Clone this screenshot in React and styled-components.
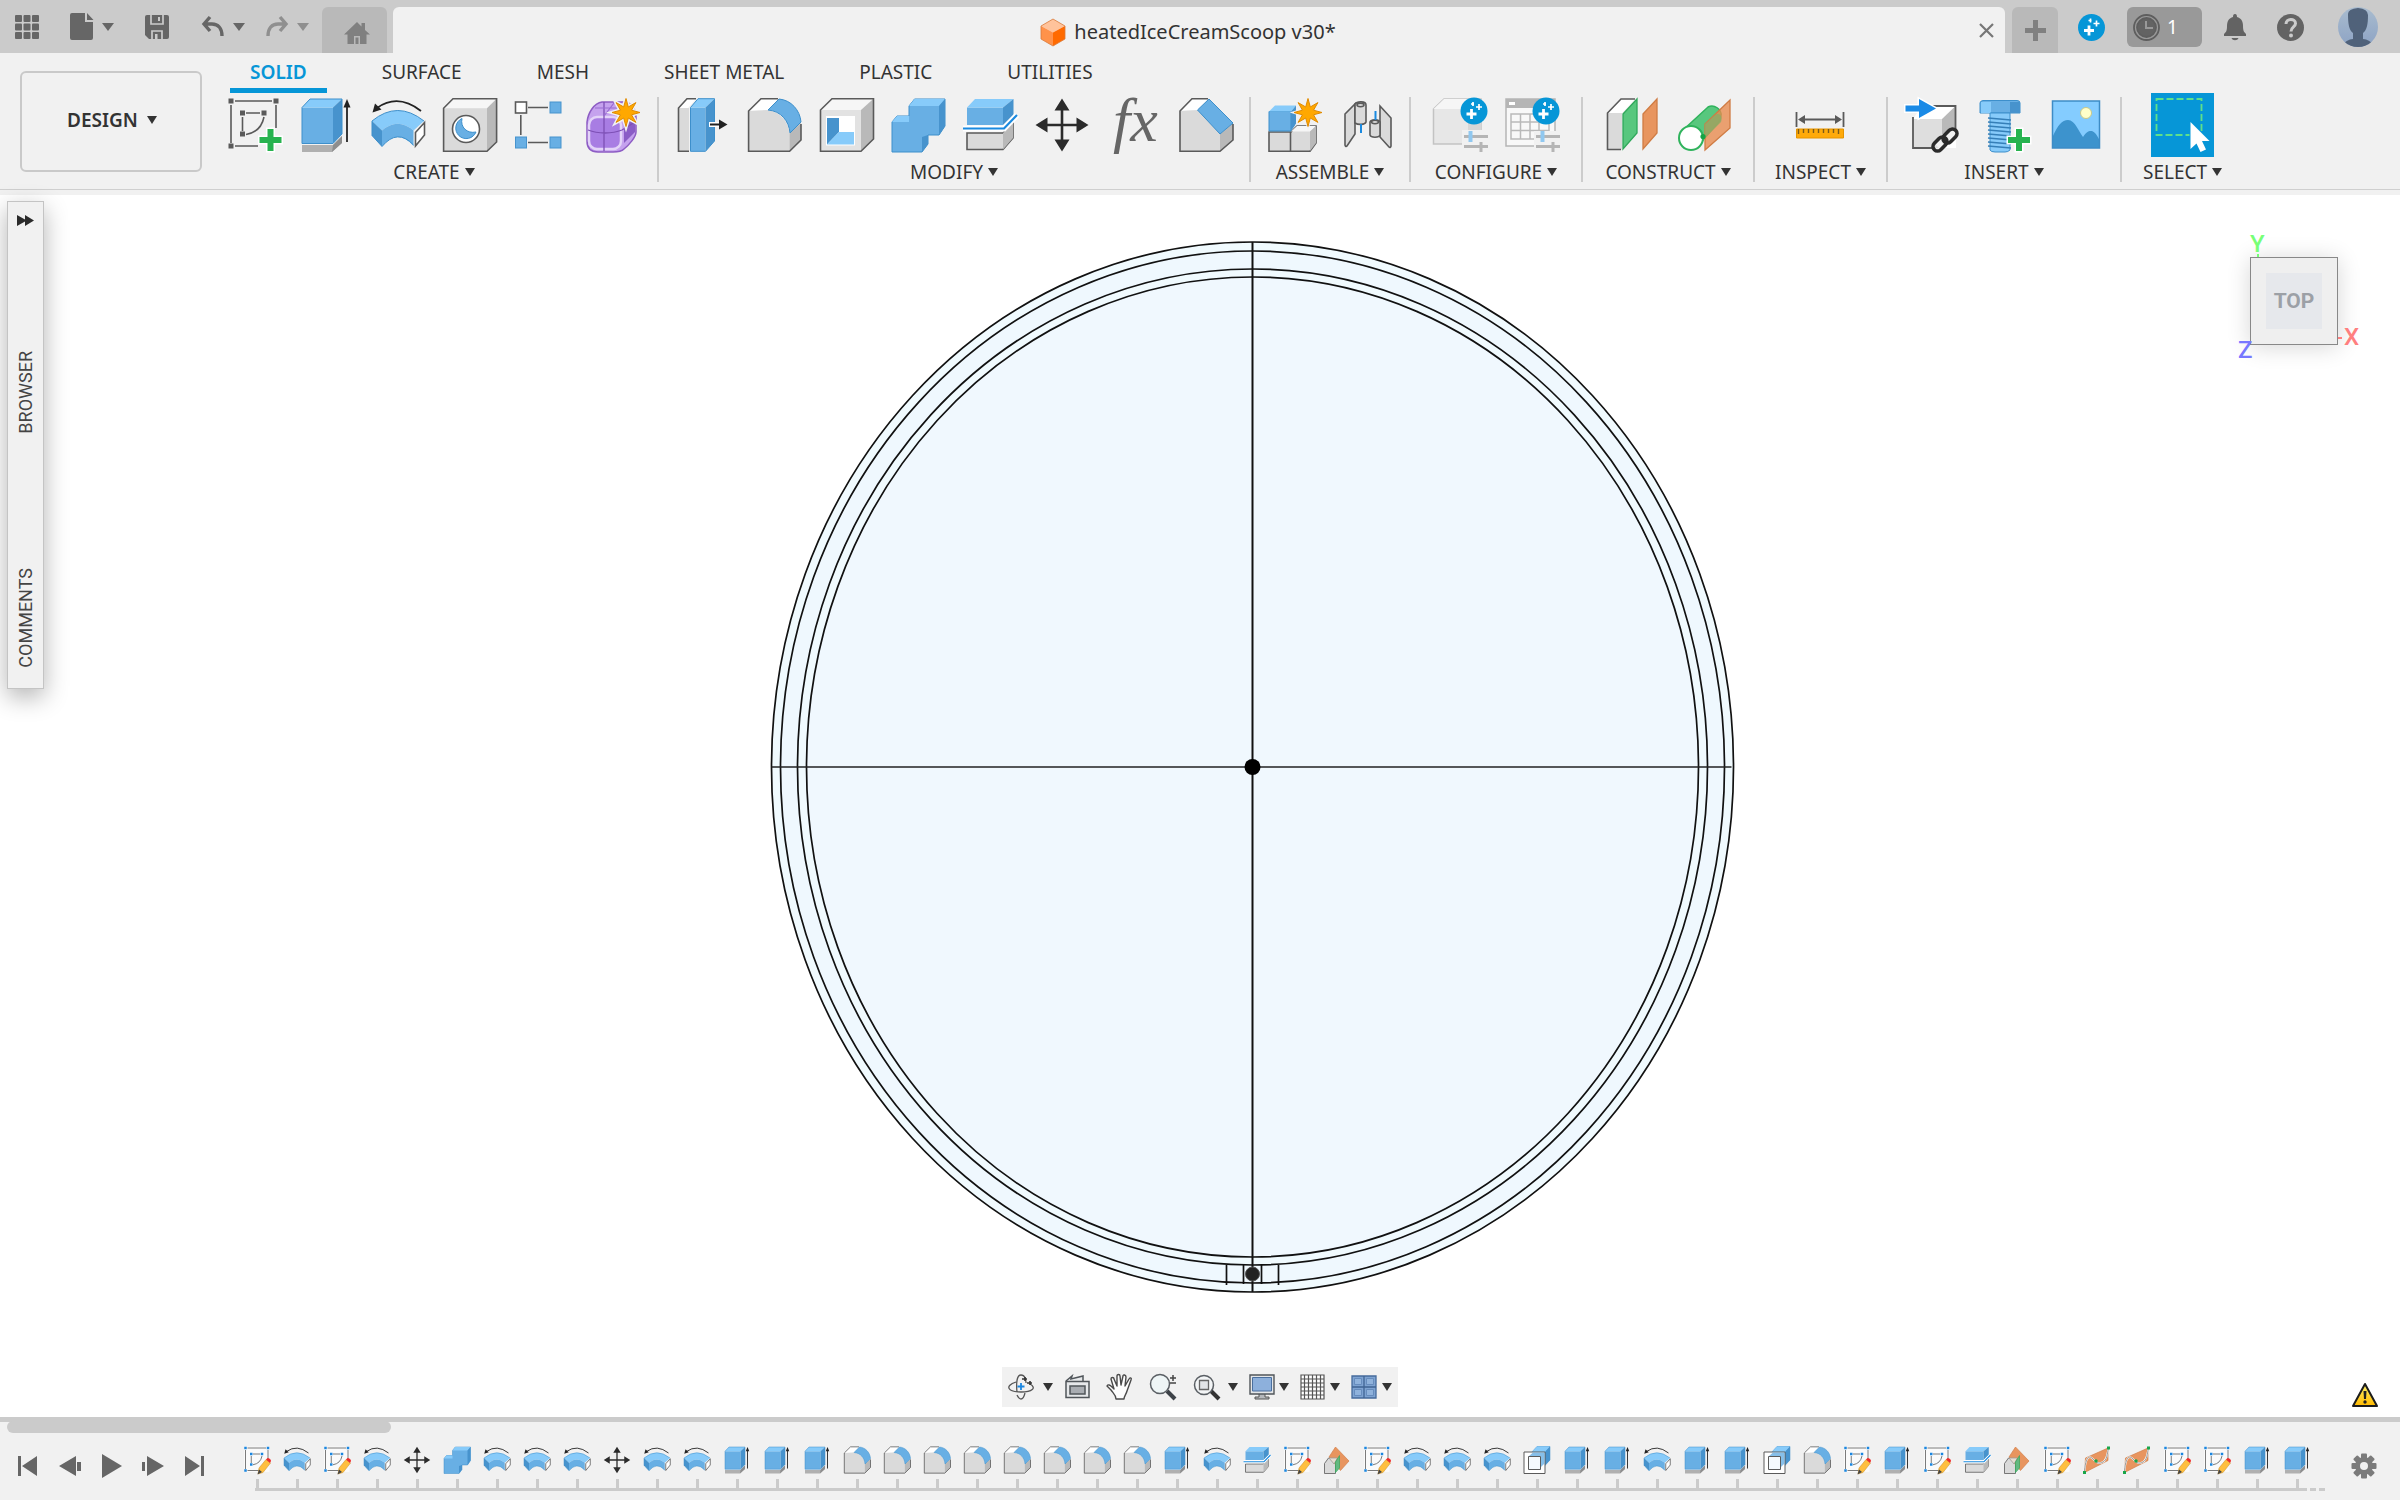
import React from "react";
import styled, { createGlobalStyle } from "styled-components";

const C = {
  light: "#87cbfa",
  mid: "#68afe4",
  dark: "#4793cd",
  edge: "#3d8fcb",
  line: "#5a5a5a",
  pale: "#f6f6f6",
  grey: "#dadada",
  shade: "#b9b9b9",
  panel: "#f1f1f1",
  bar: "#cbcbcb",
  ink: "#333333",
  accent: "#0696d7",
};

const GlobalStyle = createGlobalStyle`
  *, *::before, *::after { box-sizing: border-box; }
  body {
    margin: 0;
    background: #ffffff;
    color: ${C.ink};
    font-family: "Noto Sans", "Open Sans", sans-serif;
    font-size: 19px;
    overflow: hidden;
  }
  button {
    margin: 0;
    padding: 0;
    border: 0;
    background: none;
    color: inherit;
    font: inherit;
    cursor: pointer;
  }
  svg { display: block; overflow: visible; }
`;

/* ---------- layout ---------- */

const Shell = styled.div`
  display: flex;
  flex-direction: column;
  height: 100vh;
`;

const TitleBar = styled.header`
  display: flex;
  align-items: stretch;
  height: 53px;
  padding-top: 7px;
  background: ${C.bar};
  color: #666666;
`;

const QuickAccess = styled.div`
  display: flex;
  align-items: center;
  flex: 0 0 322px;
  height: 39px;
  padding-left: 15px;
`;

const QuickButton = styled.button`
  display: flex;
  align-items: center;
  gap: 8px;
  height: 28px;
  margin-right: ${(p) => p.$after || 0}px;
  color: ${(p) => (p.$dim ? "#8f8f8f" : "#666666")};
`;

const HomeTab = styled.button`
  display: flex;
  justify-content: center;
  align-items: center;
  flex: 0 0 65px;
  margin-right: 6px;
  padding: 5px 0 0 5px;
  border-radius: 6px 6px 0 0;
  background: #b9b9b9;
  color: #808080;
`;

const DocumentTab = styled.div`
  display: flex;
  align-items: center;
  flex: 1;
  margin-right: 7px;
  padding: 0 9px 0 0;
  border-radius: 6px 6px 0 0;
  background: ${C.panel};
`;

const DocumentTitle = styled.h1`
  display: flex;
  justify-content: center;
  align-items: center;
  gap: 9px;
  flex: 1;
  margin: 0;
  padding: 4px 0 0 8px;
  color: ${C.ink};
  font-size: 20px;
  font-weight: 400;
  line-height: 24px;
`;

const CloseButton = styled.button`
  display: flex;
  justify-content: center;
  width: 20px;
  color: #777777;
`;

const NewTab = styled.button`
  display: flex;
  justify-content: center;
  align-items: center;
  flex: 0 0 46px;
  border-radius: 6px 6px 0 0;
  background: #b9b9b9;
  color: #808080;
`;

const Account = styled.div`
  display: flex;
  align-items: center;
  height: 40px;
  padding: 0 22px 0 20px;
`;

const AccountButton = styled.button`
  display: flex;
  margin-right: ${(p) => p.$after || 0}px;
`;

const JobButton = styled.button`
  display: flex;
  align-items: center;
  gap: 7px;
  width: 75px;
  height: 40px;
  margin-right: 22px;
  padding-left: 6px;
  border-radius: 6px;
  background: #999999;
  color: #ffffff;
`;

const Ribbon = styled.section`
  display: flex;
  height: 142px;
  border-bottom: 5px solid ${C.panel};
  background: ${C.panel};
  box-shadow: inset 0 -1px 0 #cfcfcf;
`;

const WorkspaceButton = styled.button`
  display: flex;
  justify-content: center;
  align-items: center;
  gap: 9px;
  flex: 0 0 182px;
  height: 101px;
  margin: 18px 24px 0 20px;
  padding: 0 0 3px 2px;
  border: 2px solid #c9c9c9;
  border-radius: 6px;
  font-weight: 600;
`;

const RibbonBody = styled.div`
  display: flex;
  flex-direction: column;
  flex: 1;
`;

const TabRow = styled.nav`
  display: flex;
  gap: 35px;
  height: 40px;
  padding-left: 4px;
`;

const RibbonTab = styled.button`
  padding: 3px 20px 0;
  border-bottom: 5px solid ${(p) => (p.$on ? C.accent : "transparent")};
  color: ${(p) => (p.$on ? C.accent : C.ink)};
  font-weight: ${(p) => (p.$on ? 600 : 400)};
  line-height: 32px;
`;

const Groups = styled.div`
  display: flex;
  padding-top: 4px;
`;

const Group = styled.div`
  display: flex;
  flex-direction: column;
  align-items: center;
  height: 85px;
  padding: 0 ${(p) => p.$pad}px;
  border-right: 2px solid #cccccc;

  &:first-child {
    padding-left: 0;
  }

  &:last-child {
    border-right: 0;
  }
`;

const Tools = styled.div`
  display: flex;
  gap: 16px;
  height: 56px;
`;

const ToolButton = styled.button`
  display: flex;
  justify-content: center;
  align-items: center;
  width: 56px;
  height: 56px;
`;

const GroupLabel = styled.button`
  display: flex;
  align-items: center;
  gap: 5px;
  margin-top: 7px;
  line-height: 24px;
`;

const Viewport = styled.main`
  position: relative;
  flex: 1;
  min-height: 0;
  background: #ffffff;
`;

const ModelView = styled.svg`
  width: 100%;
  height: 100%;
`;

const SidePalette = styled.aside`
  position: absolute;
  top: 6px;
  left: 7px;
  display: flex;
  flex-direction: column;
  align-items: center;
  width: 37px;
  height: 488px;
  padding: 13px 0 20px;
  border: 1px solid #c4c4c4;
  background: ${C.panel};
  box-shadow: 0 8px 24px rgba(0, 0, 0, 0.3);
`;

const ExpandButton = styled.button`
  display: flex;
  margin-bottom: auto;
`;

const PaletteTab = styled.button`
  writing-mode: vertical-rl;
  transform: rotate(180deg);
  font-family: Roboto, "Liberation Sans", sans-serif;
  font-size: 18px;
  line-height: 24px;
  color: #444444;

  & + & {
    margin-top: 135px;
  }
`;

const ViewCube = styled.div`
  position: absolute;
  top: 62px;
  right: 62px;
  display: flex;
  justify-content: center;
  align-items: center;
  width: 88px;
  height: 88px;
  border: 1px solid #888888;
  background: #efefef;
  box-shadow: 0 2px 22px rgba(0, 0, 0, 0.16);
`;

const CubeFace = styled.button`
  width: 56px;
  height: 56px;
  background: #e6e8ec;
  color: #9ca0a6;
  font-family: Roboto, "Noto Sans", sans-serif;
  font-size: 21px;
  font-weight: 700;
`;

const AxisLabel = styled.span`
  position: absolute;
  top: ${(p) => p.$top}px;
  left: ${(p) => p.$left}px;
  color: ${(p) => p.$color};
  font-family: Roboto, "Noto Sans", sans-serif;
  font-size: 24px;
  font-weight: 500;
  line-height: 24px;
`;

const AxisTick = styled.span`
  position: absolute;
  top: ${(p) => p.$top}px;
  left: ${(p) => p.$left}px;
  width: ${(p) => p.$w}px;
  height: ${(p) => p.$h}px;
  background: ${(p) => p.$color};
`;

const NavBar = styled.div`
  position: absolute;
  bottom: 10px;
  left: 50%;
  display: flex;
  align-items: center;
  height: 40px;
  padding: 0 6px 0 5px;
  background: ${C.panel};
  transform: translateX(-50%);
`;

const NavButton = styled.button`
  display: flex;
  align-items: center;
  gap: ${(p) => p.$gap || 4}px;
  margin-right: ${(p) => p.$after || 0}px;
`;

const Warning = styled.button`
  position: absolute;
  right: 21px;
  bottom: 9px;
`;

const Timeline = styled.footer`
  position: relative;
  display: flex;
  height: 83px;
  padding-top: 27px;
  border-top: 5px solid ${C.bar};
  background: ${C.panel};
`;

const ScrollThumb = styled.div`
  position: absolute;
  top: -1px;
  left: 7px;
  width: 16%;
  height: 12px;
  border-radius: 6px;
  background: ${C.bar};
`;

const Playback = styled.div`
  display: flex;
  align-items: center;
  justify-content: space-between;
  flex: 0 0 237px;
  height: 34px;
  padding: 0 32px 0 18px;
  color: #666666;
`;

const Track = styled.ol`
  display: flex;
  flex: 1;
  height: 46px;
  margin: -4px 0 0;
  padding: 0;
  list-style: none;
`;

const Feature = styled.li`
  display: flex;
  flex-direction: column;
  align-items: center;
  flex: 0 0 40px;
  background: linear-gradient(${C.bar}, ${C.bar}) ${(p) => (p.$first ? "right" : "left")} bottom /
    ${(p) => (p.$first ? "22px" : p.$last ? "30px" : "100%")} 3px no-repeat;

  &::after {
    content: "";
    width: 3px;
    height: 12px;
    margin-top: auto;
    background: ${C.bar};
  }
`;

const FeatureButton = styled.button`
  display: flex;
  margin-top: 1px;
`;

const TrackEnd = styled.li`
  align-self: flex-end;
  width: 15px;
  height: 3px;
  margin-left: -7px;
  background: repeating-linear-gradient(90deg, ${C.bar} 0 6px, transparent 6px 9px);
`;

const SettingsButton = styled.button`
  display: flex;
  align-items: center;
  height: 34px;
  margin-right: 23px;
  color: #7b7b7b;
`;

/* ---------- small drawings ---------- */

const Caret = ({ w = 10, h = 8 }) => (
  <svg width={w} height={h} viewBox="0 0 10 8" preserveAspectRatio="none" aria-hidden="true">
    <path d="M0 0h10L5 8z" fill="currentColor" />
  </svg>
);

const starPoints = (cx, cy, R, r, n) =>
  Array.from({ length: n * 2 }, (_, i) => {
    const a = (Math.PI * i) / n - Math.PI / 2;
    const d = i % 2 ? r : R;
    return `${(cx + d * Math.cos(a)).toFixed(2)},${(cy + d * Math.sin(a)).toFixed(2)}`;
  }).join(" ");

const Star = ({ cx, cy }) => (
  <polygon points={starPoints(cx, cy, 14, 6, 8)} fill="#ffa800" stroke="#e08a00" strokeWidth="1" />
);

const GreenPlus = ({ x, y }) => (
  <path
    d={`M${x - 3} ${y - 11}h6v8h8v6h-8v8h-6v-8h-8v-6h8z`}
    fill="#27b34f"
    stroke="#ffffff"
    strokeWidth="3"
    paintOrder="stroke"
  />
);

const SparkBadge = ({ cx, cy, r = 13.5 }) => (
  <g>
    <circle cx={cx} cy={cy} r={r} fill={C.accent} />
    <path d={`M${cx - 2.5} ${cy - 2}v10M${cx - 7.5} ${cy + 3}h10`} stroke="#fff" strokeWidth="2.8" />
    <path
      d={`M${cx + 5} ${cy - 7}v6M${cx + 2} ${cy - 4}h6M${cx - 1} ${cy - 9}v4M${cx - 3} ${cy - 7}h3`}
      stroke="#fff"
      strokeWidth="1.7"
    />
  </g>
);

const Sliders = () => (
  <g stroke="#b5b5b5" strokeWidth="3">
    <path d="M32 39.5h24M32 49.5h24" />
    <path d="M49 45v10" />
    <path d="M38.5 34v11" stroke="#90c8f0" strokeWidth="4" />
  </g>
);

const SketchBase = ({ dot }) => (
  <g>
    <path d="M9 4h37M5 8v38M9 49h23M50 8v23M20 16h14M16.5 20v14M38 20Q35 35 20 37.5" fill="none" stroke={C.line} strokeWidth="1.6" />
    <g fill={dot}>
      <rect x="2.5" y="1.5" width="5" height="5" />
      <rect x="47.5" y="1.5" width="5" height="5" />
      <rect x="2.5" y="46.5" width="5" height="5" />
      <rect x="14" y="13.5" width="5" height="5" />
      <rect x="35.5" y="13.5" width="5" height="5" />
      <rect x="14" y="34.5" width="5" height="5" />
    </g>
  </g>
);

const PlaneGlyph = ({ d, fill = "#e8955f", stroke = "#d07c44" }) => (
  <path d={d} fill={fill} stroke={stroke} strokeWidth="1.3" />
);

const glyphs = {
  sketch: (
    <>
      <SketchBase dot="#5a5a5a" />
      <GreenPlus x={44.5} y={43} />
    </>
  ),
  sketchEdit: (
    <>
      <rect x="2" y="1" width="51" height="51" fill="#fafafa" />
      <SketchBase dot="#1a86e0" />
      <path d="M46 27l9 7-15 19-10 3 2-12z" fill="#ffbf3f" stroke="#c68a2a" />
      <path d="M46 27l3-3c4 0 7 3 7 6l-2 4z" fill="#ee2c2c" />
      <path d="M32 47l6 5-9 5z" fill="#444" />
    </>
  ),
  extrude: (
    <>
      <path d="M4 48h31l9-9v7l-10 9H4z" fill="#b0b0b0" />
      <path d="M35 48l9-9v7l-10 9z" fill="#8d8d8d" />
      <path d="M4 10.5h31v36H4z" fill={C.mid} />
      <path d="M4 10.5L12 2h32l-9 8.5z" fill={C.light} />
      <path d="M35 10.5L44 2v35l-9 9.5z" fill={C.dark} />
      <path d="M4 46.5v-36L12 2h32v35l-9 9.5z" fill="none" stroke={C.edge} />
      <path d="M49 9v36" stroke="#222" strokeWidth="1.8" />
      <path d="M45.5 10.5L49 2l3.5 8.5z" fill="#222" />
    </>
  ),
  revolve: (
    <>
      <path d="M2 24Q27.5 3 54 24L43.5 33.5Q27.5 20 12 33.5z" fill={C.light} />
      <path d="M12 33.5Q27.5 20 43.5 33.5V49Q27.5 31 12 49.5z" fill={C.mid} />
      <path d="M2 24l10 9.5v16L2 38.5z" fill={C.dark} />
      <path d="M43.5 48Q27.5 31 12 49.5L2 38.5V24Q27.5 3 54 24" fill="none" stroke={C.edge} />
      <path d="M45.5 35.5l9-10V38l-9 11z" fill="#fff" stroke={C.line} strokeWidth="1.6" />
      <path d="M51 14Q28-4 7 11" fill="none" stroke="#222" strokeWidth="1.8" />
      <path d="M2.5 15.5L5 6.5l6.5 6z" fill="#222" />
    </>
  ),
  hole: (
    <>
      <path d="M1.6 11.3L11 1.7h43.6L45 11.3z" fill={C.pale} />
      <path d="M1.6 11.3H45v43H1.6z" fill={C.grey} />
      <path d="M45 11.3l9.6-9.6V45L45 54.3z" fill={C.shade} />
      <path d="M1.6 54.3v-43L11 1.7h43.6V45L45 54.3z" fill="none" stroke={C.line} strokeWidth="1.6" />
      <circle cx="24" cy="32" r="13.5" fill="#fff" stroke={C.line} strokeWidth="1.6" />
      <path d="M20 21.5A10.5 10.5 0 1 0 34 35C25 37 18 30 20 21.5z" fill={C.mid} stroke={C.edge} />
    </>
  ),
  pattern: (
    <>
      <path d="M14 10.5h20M6.8 18v20M14 45.5h20" stroke={C.line} strokeWidth="1.6" />
      <rect x="1.5" y="5" width="11" height="11" fill="#fff" stroke={C.line} strokeWidth="1.6" />
      <rect x="36" y="5" width="11" height="11" fill={C.mid} stroke={C.dark} />
      <rect x="1.5" y="40" width="11" height="11" fill={C.mid} stroke={C.dark} />
      <rect x="36" y="40" width="11" height="11" fill={C.mid} stroke={C.dark} />
    </>
  ),
  form: (
    <>
      <path d="M1 25C2 16 8 6 16 5h24c7 2 10 8 10 16v14c0 5-7 13-12 17-3 3-7 3-11 3H12C4 55 1 51 1 44z" fill="#c5a2ee" stroke="#8d5cc4" strokeWidth="1.5" />
      <rect x="3" y="20" width="32" height="32" rx="8" fill="#a87de3" stroke="#e3d3f8" strokeWidth="2.5" />
      <path d="M38 24l11-8v19L38 46z" fill="#8a5cc6" />
      <path d="M2 33c10 4 24 4 34 0l13-8M18 5v49" fill="none" stroke="#7d50b5" strokeWidth="1.3" />
      <path d="M9 11h30M18 19l10-13" fill="none" stroke="#9a6dd2" strokeWidth="1.2" />
      <polygon points={starPoints(40, 15.5, 15, 7, 8)} fill={C.panel} stroke={C.panel} strokeWidth="3" />
      <Star cx={40} cy={15.5} />
    </>
  ),
  pressPull: (
    <>
      <path d="M4.5 11L13 1.7h9L14 11z" fill="#fff" />
      <path d="M4.5 11H15v43.3H4.5z" fill={C.grey} />
      <path d="M15 54.3H4.5V11L13 1.7h9" fill="none" stroke={C.line} strokeWidth="1.6" />
      <path d="M16.5 10.5h15v43.8h-15z" fill={C.mid} />
      <path d="M16.5 10.5l7.5-8.8h16.5l-9 8.8z" fill={C.light} />
      <path d="M31.5 10.5l9-8.8V44l-9 10.3z" fill={C.dark} />
      <path d="M16.5 54.3V10.5L24 1.7h16.5V44l-9 10.3z" fill="none" stroke={C.edge} />
      <path d="M35 27.5h13" stroke="#fff" strokeWidth="5" />
      <path d="M36 27.5h12" stroke="#222" strokeWidth="2" />
      <path d="M45 22.5l8.5 5-8.5 5z" fill="#222" />
    </>
  ),
  fillet: (
    <>
      <path d="M2.6 14L15 1.7h17L22 13z" fill="#fff" />
      <path d="M2.6 14L22 13c12 2 20 11 21.5 23v18.3H2.6z" fill={C.grey} />
      <path d="M43.5 36L55 26v17L43.5 54.3z" fill={C.shade} />
      <path d="M32 1.7H15L2.6 14v40.3h41L55 43V27" fill="none" stroke={C.line} strokeWidth="1.6" />
      <path d="M33 2c12 1 21 11 22 23L44 36C43 24 35 14 22 13z" fill={C.mid} stroke={C.edge} />
    </>
  ),
  shell: (
    <>
      <path d="M2.5 13L14 1.7h41.5L43 13z" fill={C.pale} />
      <path d="M2.5 13H43v41.3H2.5z" fill="#e2e2e2" />
      <path d="M43 13L55.5 1.7V42L43 54.3z" fill={C.shade} />
      <path d="M2.5 54.3V13L14 1.7h41.5V42L43 54.3z" fill="none" stroke={C.line} strokeWidth="1.6" />
      <path d="M8 19h29v29.5H8z" fill="#fff" />
      <path d="M9 21h12v14L9 47.5z" fill={C.dark} />
      <path d="M21 35h15v12.5H9z" fill={C.light} />
    </>
  ),
  combine: (
    <>
      <path d="M2 25l5-6h12V9l5.5-7H55v27l-6 9H38v9l-6 8H2z" fill={C.mid} stroke={C.edge} />
      <path d="M19 9l5.5-7H55l-6 7z" fill={C.light} />
      <path d="M2 25l5-6h12v6z" fill={C.light} />
      <path d="M49 9l6-7v27l-6 9zM32 40l6-2v9l-6 8z" fill={C.dark} />
    </>
  ),
  split: (
    <>
      <path d="M5 36h36l10-10v15L41 52.5H5z" fill={C.grey} stroke={C.line} strokeWidth="1.6" />
      <path d="M41 36l10-10v15L41 52.5z" fill={C.shade} />
      <path d="M5 10.5h36V28H5z" fill={C.mid} />
      <path d="M5 10.5L13 2h38.5L41 10.5z" fill={C.light} />
      <path d="M41 10.5L51.5 2v16L41 28z" fill={C.dark} />
      <path d="M1 31.5h41L55 18" fill="none" stroke="#fff" strokeWidth="6" />
      <path d="M1 31.5h41L55 18" fill="none" stroke="#1a8ae0" strokeWidth="2.2" />
    </>
  ),
  move: (
    <>
      <path d="M28 8v40M8 28h40" stroke="#2b2b2b" strokeWidth="2.6" />
      <path d="M28 1.5l7.5 12h-15zM28 54.5l7.5-12h-15zM1.5 28l12-7.5v15zM54.5 28l-12-7.5v15z" fill="#2b2b2b" />
    </>
  ),
  fx: (
    <text x="7" y="44" fontFamily='"Liberation Serif", serif' fontStyle="italic" fontSize="62" fill="#666">
      fx
    </text>
  ),
  chamfer: (
    <>
      <path d="M2 14L14 1.7h16L20 13z" fill="#fff" />
      <path d="M2 14l18-1 22 24v17.3H2z" fill={C.grey} />
      <path d="M42 37l13-11v17L42 54.3z" fill={C.shade} />
      <path d="M30 1.7H14L2 14v40.3h40L55 43V27" fill="none" stroke={C.line} strokeWidth="1.6" />
      <path d="M31 2l24 24-13 11-22.5-24z" fill={C.mid} stroke={C.edge} />
    </>
  ),
  component: (
    <>
      <path d="M25 35l6-6h19v17l-6 8.3H3V35z" fill={C.grey} stroke={C.line} strokeWidth="1.6" />
      <path d="M25 34.5l6-5.5h19l-6 5.5z" fill={C.pale} />
      <path d="M44 34.5l6-5.5v17l-6 8z" fill={C.shade} />
      <path d="M24.5 35v19" stroke={C.line} strokeWidth="1.6" />
      <path d="M3 14.5h22V34H3z" fill={C.mid} stroke={C.edge} />
      <path d="M3 14.5l6-6h21l-5 6z" fill={C.light} />
      <path d="M25 14.5l5-6V27l-5 7z" fill={C.dark} />
      <polygon points={starPoints(42, 15.5, 15, 7, 8)} fill={C.panel} stroke={C.panel} strokeWidth="2" />
      <Star cx={42} cy={15.5} />
    </>
  ),
  joint: (
    <>
      <g stroke={C.line} strokeWidth="1.6" fill={C.grey}>
        <path d="M7 17L17 7v30L9 49c-1 1-2 0-2-1z" />
        <path d="M17 7c2-3 11-3 11 1v17c-1 3-8 3-11 1z" />
        <ellipse cx="22.5" cy="8" rx="3.5" ry="1.6" fill="#fff" />
        <path d="M42 9l11 12v28c0 1-1 2-2 1L42 40z" />
        <path d="M32 25c1-3 9-3 10 0v13c-1 3-9 3-10 0z" />
        <ellipse cx="37" cy="25" rx="3.5" ry="1.6" fill="#fff" />
      </g>
      <path d="M23 27v9M37.5 14v9" stroke="#1a8ae0" strokeWidth="2" />
    </>
  ),
  configModel: (
    <>
      <path d="M1.5 12L12 2h37v35L36 47H1.5z" fill="#e7e7e7" stroke="#c3c3c3" strokeWidth="1.5" />
      <path d="M36 12L49 2v35L36 47z" fill="#d6d6d6" />
      <path d="M1.5 12L12 2h37L36 12z" fill="#f6f6f6" />
      <path d="M30 33h28v24H30z" fill={C.panel} />
      <Sliders />
      <SparkBadge cx={42} cy={14} />
    </>
  ),
  configTable: (
    <>
      <path d="M2 2h49v47H2z" fill="#f8f8f8" stroke="#b5b5b5" strokeWidth="1.5" />
      <path d="M2 2h49v9H2z" fill="#b5b5b5" />
      <path d="M5 5h6v3H5z" fill="#fff" />
      <path d="M7 17h38v25H7zM7 25h38M7 33.5h38M16.5 17v25M26 17v25M35 17v25" fill="none" stroke="#b9b9b9" strokeWidth="1.5" />
      <path d="M30 34h28v24H30z" fill={C.panel} />
      <Sliders />
      <SparkBadge cx={42} cy={14} />
    </>
  ),
  offsetPlane: (
    <>
      <path d="M3.5 16L17 2h14L18 16z" fill="#fff" />
      <path d="M3.5 16H18v36.5H3.5z" fill={C.grey} />
      <path d="M17 52.5H3.5V16L17 2h14" fill="none" stroke={C.line} strokeWidth="1.6" />
      <PlaneGlyph d="M19 17L33 2v34L19 52z" fill="#58c77e" stroke="#2fa85a" />
      <PlaneGlyph d="M39 17L53 2v34L39 52z" />
    </>
  ),
  tangentPlane: (
    <>
      <path d="M6 34L32 10c6-3 14 2 13 9 0 3-1 5-3 7L21 50z" fill="#58c77e" stroke="#2fb35c" strokeWidth="1.5" />
      <circle cx="15" cy="41" r="12" fill="#fff" stroke="#2fb35c" strokeWidth="2" />
      <PlaneGlyph d="M29 27L54 3v28L29 53z" fill="rgba(232,140,80,.8)" />
      <path d="M29 27l10-9c4-3 8 1 6 7L29 41z" fill="#8aab66" opacity=".8" />
      <circle cx="27" cy="39.5" r="2.6" fill="#16a344" />
    </>
  ),
  measure: (
    <>
      <path d="M4.5 15v15M51.5 15v15M8 22.5h40" stroke={C.line} strokeWidth="1.8" />
      <path d="M6 22.5l7-4.5v9zM50 22.5l-7-4.5v9z" fill={C.line} />
      <path d="M4.5 32h47v9h-47z" fill="#ffaa0a" stroke="#e59400" />
      <path d="M6.5 32v5M11.5 32v4M16.5 32v4M21.5 32v4M26.5 32v4M31.5 32v4M36.5 32v4M41.5 32v4M46.5 32v5" stroke="#7a5a1a" strokeWidth="1.4" />
    </>
  ),
  insertLink: (
    <>
      <path d="M9 22l9-13h34v42H9z" fill="#fff" />
      <path d="M9 22h29v29H9z" fill="#dedede" />
      <path d="M38 22L51.5 9v30L38 51z" fill={C.shade} />
      <path d="M51.5 36V9H28M9 20v31h20" fill="none" stroke={C.line} strokeWidth="1.8" />
      <path d="M1.5 8.5H15V2l17 9.5L15 21v-6.5H1.5z" fill="#1a8ae6" stroke="#fff" strokeWidth="3" paintOrder="stroke" />
      <path d="M33 49l17-15" stroke={C.panel} strokeWidth="10" />
      <g fill="none" stroke="#2b2b2b" strokeWidth="3.6">
        <rect x="-8" y="-4.5" width="16" height="9" rx="4.5" transform="translate(36 47) rotate(-45)" />
        <rect x="-8" y="-4.5" width="16" height="9" rx="4.5" transform="translate(46 39) rotate(-45)" />
      </g>
    </>
  ),
  bolt: (
    <>
      <path d="M4 6q0-2 3-2.5h34q3 0 3 2.5v10H4z" fill={C.mid} stroke={C.edge} />
      <path d="M5 5h10v11H5z" fill={C.light} />
      <path d="M34 5h10v11H34z" fill={C.dark} />
      <path d="M14 16h20v37q-2 2-5 2H19q-4 0-5-2z" fill={C.light} stroke={C.edge} />
      <path d="M12 21l23 2M12 25l23 2M12 29l23 2M12 33l23 2M12 37l23 2M12 41l23 2M12 45l23 2M12 49l23 2" stroke="#357fb8" strokeWidth="1.5" />
      <GreenPlus x={43} y={43} />
    </>
  ),
  picture: (
    <>
      <path d="M4.5 4h47v47h-47z" fill="#84ccff" />
      <path d="M4.5 40C10 28 14 23 20 23c7 0 11 12 15 17 4-6 6-6 9-6 3 1 5 4 7.5 9v8h-47z" fill="#3d93cd" />
      <circle cx="38" cy="16" r="5.5" fill="#ffffc9" stroke="#c8c88a" />
      <path d="M4.5 4h47v47h-47z" fill="none" stroke="#3d8cc6" strokeWidth="1.5" />
    </>
  ),
  planeAngle: (
    <>
      <path d="M3 35l8-11h14v31H3z" fill={C.grey} stroke={C.line} strokeWidth="1.6" />
      <PlaneGlyph d="M25 2l27 28-17 19-23-27z" />
      <path d="M12 24h17L22 36z" fill="#e6ddd2" stroke="#999" strokeWidth="1.5" />
      <path d="M33 19v25l-8 9V32z" fill="#63b981" stroke="#2fa85a" strokeWidth="1.3" />
    </>
  ),
  surfacePlane: (
    <>
      <PlaneGlyph d="M5 24L50 4v25L3 53z" />
      <path d="M3 50C5 24 12 17 20 26s12 10 20 6 8-15 11-27" fill="none" stroke="#fff" strokeWidth="3.5" />
      <path d="M3 50C5 24 12 17 20 26s12 10 20 6 8-15 11-27" fill="none" stroke="#777" strokeWidth="1.5" />
      <g fill="#18a64a">
        <rect x="0" y="50" width="6" height="6" />
        <rect x="48" y="1" width="6" height="6" />
        <circle cx="26" cy="30" r="3.5" />
      </g>
    </>
  ),
  copyBody: (
    <>
      <path d="M16 14L28 1h26v27L42 41H16z" fill={C.mid} stroke={C.edge} />
      <path d="M16 14L28 1h26L42 14z" fill={C.light} />
      <path d="M42 14L54 1v27L42 41z" fill={C.dark} />
      <path d="M2 12h42v43H2z" fill="#fff" stroke={C.line} strokeWidth="2" />
      <path d="M12 20l8-7h23v22l-8 8V20z" fill={C.mid} opacity=".8" />
      <path d="M11 21h24v26H11z" fill="#f4f9fd" stroke={C.line} strokeWidth="2" />
    </>
  ),
};

const Glyph = ({ name, size = 56 }) => (
  <svg width={size} height={size} viewBox="0 0 56 56" aria-hidden="true">
    {glyphs[name]}
  </svg>
);

const SelectIcon = styled.svg`
  flex-shrink: 0;
`;

const SelectGlyph = () => (
  <SelectIcon width="63" height="64" viewBox="0 0 63 64" aria-hidden="true">
    <path d="M0 0h63v64H0z" fill={C.accent} />
    <path d="M5.5 6h45v36h-45z" fill="none" stroke="#5fe08a" strokeWidth="1.8" strokeDasharray="7 3" />
    <path d="M39.5 29v27l6-5.5 4 8.5 5.5-2.5-4-8.5h7.5z" fill="#fff" stroke={C.accent} strokeWidth="2" paintOrder="stroke" />
  </SelectIcon>
);

/* ---------- data ---------- */

const ribbonTabs = ["SOLID", "SURFACE", "MESH", "SHEET METAL", "PLASTIC", "UTILITIES"];

const ribbonGroups = [
  { label: "CREATE", pad: 15, tools: ["sketch", "extrude", "revolve", "hole", "pattern", "form"] },
  { label: "MODIFY", pad: 15, tools: ["pressPull", "fillet", "shell", "combine", "split", "move", "fx", "chamfer"] },
  { label: "ASSEMBLE", pad: 15, tools: ["component", "joint"] },
  { label: "CONFIGURE", pad: 21, tools: ["configModel", "configTable"] },
  { label: "CONSTRUCT", pad: 21, tools: ["offsetPlane", "tangentPlane"] },
  { label: "INSPECT", pad: 20, tools: ["measure"] },
  { label: "INSERT", pad: 16, tools: ["insertLink", "bolt", "picture"] },
  { label: "SELECT", pad: 21, tools: ["select"] },
];

const run = (name, n) => Array(n).fill(name);

const features = [
  "sketchEdit", "revolve", "sketchEdit", "revolve", "move", "combine",
  ...run("revolve", 3), "move", ...run("revolve", 2), ...run("extrude", 3),
  ...run("fillet", 8), "extrude", "revolve", "split", "sketchEdit", "planeAngle",
  "sketchEdit", ...run("revolve", 3), "copyBody", ...run("extrude", 2), "revolve",
  ...run("extrude", 2), "copyBody", "fillet", "sketchEdit", "extrude", "sketchEdit",
  "split", "planeAngle", "sketchEdit", ...run("surfacePlane", 2), ...run("sketchEdit", 2),
  ...run("extrude", 2),
];

const rings = [
  { rx: 481, ry: 525, fill: "#f0fafe" },
  { rx: 472, ry: 516, fill: "#eff8fe" },
  { rx: 455, ry: 498, fill: "#f0fafe" },
  { rx: 446, ry: 490, fill: "#f0f8fe" },
];

const playback = [
  { label: "Go to start", w: 20, d: "M0 2h3v20H0zM19 2v20L4 12z" },
  { label: "Step back", w: 22, d: "M17 2v20L0 12zM18 8h4v9h-4z" },
  { label: "Play", w: 20, d: "M0 0l20 12L0 24z" },
  { label: "Step forward", w: 22, d: "M5 2v20l17-10zM0 8h3v9H0z" },
  { label: "Go to end", w: 20, d: "M0 2v20l15-10zM16 2h3v20h-3z" },
];

/* ---------- sections ---------- */

function TopBar() {
  return (
    <TitleBar>
      <QuickAccess>
        <QuickButton aria-label="Data panel" $after={31}>
          <svg width="24" height="24" viewBox="0 0 24 24" fill="currentColor">
            {[0, 8.5, 17].map((y) =>
              [0, 8.5, 17].map((x) => <rect key={`${x}-${y}`} x={x} y={y} width="7" height="7" rx="1" />)
            )}
          </svg>
        </QuickButton>
        <QuickButton aria-label="File" $after={31}>
          <svg width="24" height="27" viewBox="0 0 24 27" fill="currentColor">
            <path d="M2 0h13v9h8v16a2 2 0 0 1-2 2H2a2 2 0 0 1-2-2V2a2 2 0 0 1 2-2zM17 0l6.5 7H17z" />
          </svg>
          <Caret w={12} h={8} />
        </QuickButton>
        <QuickButton aria-label="Save" $after={32}>
          <svg width="24" height="24" viewBox="0 0 24 24">
            <path d="M2 0h20a2 2 0 0 1 2 2v20a2 2 0 0 1-2 2H4l-4-4V2a2 2 0 0 1 2-2z" fill="currentColor" />
            <path d="M6 0v9h12V0M7 24v-8h10v8" fill="none" stroke={C.bar} strokeWidth="1.7" />
            <path d="M10 19h2.5v5H10zM13 2h2v4h-2z" fill={C.bar} />
          </svg>
        </QuickButton>
        <QuickButton aria-label="Undo" $after={20}>
          <svg width="24" height="24" viewBox="0 0 24 24" fill="none" stroke="currentColor" strokeWidth="3.4">
            <path d="M9 2L3 9l6 7M3 9h8c6 0 10 4 10 12" />
          </svg>
          <Caret w={12} h={8} />
        </QuickButton>
        <QuickButton aria-label="Redo" $dim>
          <svg width="24" height="24" viewBox="0 0 24 24" fill="none" stroke="currentColor" strokeWidth="3.4">
            <path d="M15 2l6 7-6 7M21 9h-8c-6 0-10 4-10 12" />
          </svg>
          <Caret w={12} h={8} />
        </QuickButton>
      </QuickAccess>
      <HomeTab aria-label="Home">
        <svg width="26" height="24" viewBox="0 0 26 24" fill="currentColor">
          <path d="M13 1l4.5 4.5V2H21v7l5 4.5h-3.5V23H16v-7h-2.5v7H3.5v-9.5H0z" />
          <path d="M10 15h6v8h-6z" fill="#b9b9b9" />
          <path d="M11.5 16.5h3V23h-3z" />
        </svg>
      </HomeTab>
      <DocumentTab>
        <DocumentTitle>
          <svg width="24" height="27" viewBox="0 0 24 27" aria-hidden="true">
            <path d="M12 0l12 7-12 6.5L0 7z" fill="#ffc39b" />
            <path d="M0 7l12 6.5V27L0 20z" fill="#ff924a" />
            <path d="M24 7l-12 6.5V27l12-7z" fill="#ff6a00" />
            <path d="M12 0l12 7v13l-12 7-12-7V7z" fill="none" stroke="#d97a3a" strokeWidth=".8" />
          </svg>
          heatedIceCreamScoop v30*
        </DocumentTitle>
        <CloseButton aria-label="Close document">
          <svg width="15" height="15" viewBox="0 0 15 15">
            <path d="M1 1l13 13M14 1L1 14" stroke="currentColor" strokeWidth="2.2" />
          </svg>
        </CloseButton>
      </DocumentTab>
      <NewTab aria-label="New design">
        <svg width="21" height="21" viewBox="0 0 21 21">
          <path d="M10.5 0v21M0 10.5h21" stroke="currentColor" strokeWidth="5" />
        </svg>
      </NewTab>
      <Account>
        <AccountButton aria-label="Extensions" $after={22}>
          <svg width="27" height="27" viewBox="0 0 27 27">
            <SparkBadge cx={13.5} cy={13.5} />
          </svg>
        </AccountButton>
        <JobButton aria-label="Job status, 1">
          <svg width="27" height="27" viewBox="0 0 27 27" fill="none" stroke="#5e5e5e" strokeWidth="1.8">
            <circle cx="13.5" cy="13.5" r="12.5" />
            <circle cx="13.5" cy="13.5" r="9.5" fill="#636363" />
            <path d="M13 7v7h7" stroke="#999" strokeWidth="2" />
          </svg>
          1
        </JobButton>
        <AccountButton aria-label="Notifications" $after={31}>
          <svg width="22" height="27" viewBox="0 0 22 27" fill="#636363">
            <path d="M11 0c1.5 0 2 1 2 3 4 1 6 4 6 9 0 5 1 6 3 8v2H0v-2c2-2 3-3 3-8 0-5 2-8 6-9 0-2 .5-3 2-3zM7.5 24h7c-1 3-6 3-7 0z" />
          </svg>
        </AccountButton>
        <AccountButton aria-label="Help" $after={34}>
          <svg width="27" height="27" viewBox="0 0 27 27">
            <circle cx="13.5" cy="13.5" r="13.5" fill="#636363" />
            <path d="M9 10c0-6 9.5-6 9.5-.5 0 3.5-4.5 3.5-4.5 8" fill="none" stroke={C.bar} strokeWidth="3" />
            <circle cx="14" cy="21.5" r="2" fill={C.bar} />
          </svg>
        </AccountButton>
        <AccountButton aria-label="Profile">
          <svg width="40" height="40" viewBox="0 0 40 40">
            <defs>
              <clipPath id="avatar"><circle cx="20" cy="20" r="20" /></clipPath>
              <linearGradient id="sky" x2="0" y2="1">
                <stop offset="0" stopColor="#a9bccf" />
                <stop offset="1" stopColor="#8da3c4" />
              </linearGradient>
            </defs>
            <g clipPath="url(#avatar)">
              <path d="M0 0h40v40H0z" fill="url(#sky)" />
              <path d="M10 7q0-5 10-6 10 1 10 7c0 9-1 15-5 18v6q6 0 13 8H2q7-8 13-8v-6c-4-3-5-9-5-19z" fill="#50627a" />
            </g>
          </svg>
        </AccountButton>
      </Account>
    </TitleBar>
  );
}

function RibbonBar() {
  return (
    <Ribbon>
      <WorkspaceButton>
        DESIGN
        <Caret />
      </WorkspaceButton>
      <RibbonBody>
        <TabRow aria-label="Toolbar tabs">
          {ribbonTabs.map((t, i) => (
            <RibbonTab key={t} $on={i === 0}>{t}</RibbonTab>
          ))}
        </TabRow>
        <Groups>
          {ribbonGroups.map((g) => (
            <Group key={g.label} $pad={g.pad}>
              <Tools>
                {g.tools.map((t) => (
                  <ToolButton key={t} aria-label={t}>
                    {t === "select" ? <SelectGlyph /> : <Glyph name={t} />}
                  </ToolButton>
                ))}
              </Tools>
              <GroupLabel>
                {g.label}
                <Caret />
              </GroupLabel>
            </Group>
          ))}
        </Groups>
      </RibbonBody>
    </Ribbon>
  );
}

function Model() {
  return (
    <ModelView viewBox="0 0 2400 1222" role="img" aria-label="Top view of the model">
      <g transform="translate(1252.5 572)" fill="none" stroke="#111" strokeWidth="1.7">
        {rings.map((r) => (
          <ellipse key={r.rx} rx={r.rx} ry={r.ry} fill={r.fill} />
        ))}
        <path d="M-481 0H479" stroke="#222" strokeWidth="1.3" />
        <path d="M0-525V525" strokeWidth="2" />
        <path d="M-26 498v20M-9 498v19M9 498v19M26 498v20" />
        <circle r="8" fill="#000" stroke="none" />
        <circle cy="507" r="7" fill="#222" stroke="#555" strokeWidth="1" />
      </g>
    </ModelView>
  );
}

function NavTools() {
  return (
    <NavBar>
      <NavButton aria-label="Orbit" $gap={8} $after={12}>
        <svg width="28" height="28" viewBox="0 0 28 28" fill="none" stroke="#555" strokeWidth="1.3">
          <path d="M10 19C9 9 10 2 14 2s5 5 5 8M18 20c-1 4-2 6-4 6s-3-2-4-4" />
          <path d="M9 9C-3 13 1 19 14 19c11 0 16-4 9-8" />
          <path d="M14 10v7M10.5 13.5h7" stroke="#1a86e0" strokeWidth="1.8" />
          <path d="M15 6h5M18 4v4M20 10h5M23 8v4" stroke="#333" strokeWidth="1.6" />
        </svg>
        <Caret />
      </NavButton>
      <NavButton aria-label="Look at" $after={16}>
        <svg width="25" height="26" viewBox="0 0 25 26" fill="#e6e8ea" stroke="#50555a" strokeWidth="1.5">
          <path d="M1 7l6-5-1 3 12-3v5" />
          <path d="M1 7.5h23v16H1z" />
          <path d="M5 12h15v8H5z" fill="#a9adb2" />
        </svg>
      </NavButton>
      <NavButton aria-label="Pan" $after={15}>
        <svg width="28" height="28" viewBox="0 0 28 28" fill="#fdfdfd" stroke="#4a4a4a" strokeWidth="1.4" strokeLinejoin="round">
          <path d="M10 26c0-4-3-6-5-9l-4-4c1-2 3-1 5 1l2 2L5 6c0-2 3-2 3 0l3 7V3c0-2 3-2 3 0l1 9 2-9c0-2 3-1 3 1l-1 9 4-7c1-2 3-1 2 1l-4 11c-1 4-3 5-3 8z" />
        </svg>
      </NavButton>
      <NavButton aria-label="Zoom" $after={16}>
        <svg width="28" height="28" viewBox="0 0 28 28">
          <path d="M18 18l8 8" stroke="#3d4248" strokeWidth="4" />
          <circle cx="11" cy="11" r="9.5" fill="#eef5f6" stroke="#5a5f64" strokeWidth="1.5" />
          <path d="M24 2v6M21 5h6M21 10h6" stroke="#444" strokeWidth="1.5" />
        </svg>
      </NavButton>
      <NavButton aria-label="Fit" $gap={7} $after={11}>
        <svg width="28" height="28" viewBox="0 0 28 28">
          <path d="M18 18l8 8" stroke="#333" strokeWidth="4" />
          <circle cx="11" cy="12" r="9.5" fill="#f3f5f6" stroke="#5a5f64" strokeWidth="1.5" />
          <path d="M6.5 7.5h9v9h-9z" fill="#e2e4e7" stroke="#666" strokeWidth="1.3" />
        </svg>
        <Caret />
      </NavButton>
      <NavButton aria-label="Display settings" $after={11}>
        <svg width="26" height="28" viewBox="0 0 26 28">
          <path d="M10 20h6v4h4v2H6v-2h4z" fill="#b5b8bc" stroke="#555" />
          <path d="M1 2h24v19H1z" fill="#e4e6e8" stroke="#50555a" strokeWidth="1.4" />
          <path d="M3.5 4.5h19V18h-19z" fill="#8db0dc" stroke="#4a6f9e" />
        </svg>
        <Caret />
      </NavButton>
      <NavButton aria-label="Grid and snaps" $gap={5} $after={11}>
        <svg width="25" height="26" viewBox="0 0 25 26" fill="#fff" stroke="#555" strokeWidth="1.2">
          <path d="M1 1h23v24H1z" />
          <path d="M4.5 1v24M8.5 1v24M12.5 1v24M16.5 1v24M20.5 1v24M1 5h23M1 9h23M1 13h23M1 17h23M1 21h23" />
        </svg>
        <Caret />
      </NavButton>
      <NavButton aria-label="Viewports" $gap={5}>
        <svg width="26" height="24" viewBox="0 0 26 24">
          <path d="M1 1h24v22H1z" fill="#7ea3d2" stroke="#456b9c" strokeWidth="1.3" />
          <path d="M3.5 3.5h7v6h-7zM15.5 3.5h7v6h-7zM3.5 14.5h7v6h-7zM15.5 14.5h7v6h-7z" fill="#8fb2dc" stroke="#668cbd" />
          <path d="M13 1v22M1 12h24" stroke="#3f6494" strokeWidth="1.3" />
        </svg>
        <Caret />
      </NavButton>
    </NavBar>
  );
}

function Canvas() {
  return (
    <Viewport>
      <Model />
      <SidePalette>
        <ExpandButton aria-label="Expand palette">
          <svg width="17" height="11" viewBox="0 0 17 11">
            <path d="M0 0l8 4.5V0l9 5.5L8 11V6.5L0 11z" fill="#2b2b2b" />
          </svg>
        </ExpandButton>
        <PaletteTab>BROWSER</PaletteTab>
        <PaletteTab>COMMENTS</PaletteTab>
      </SidePalette>
      <ViewCube>
        <CubeFace>TOP</CubeFace>
        <AxisLabel $top={-26} $left={-1} $color="#77ff77">Y</AxisLabel>
        <AxisTick $top={-4} $left={6} $w={2} $h={3} $color="#77ff77" />
        <AxisLabel $top={67} $left={93} $color="#ff7f7f">X</AxisLabel>
        <AxisTick $top={79} $left={87} $w={4} $h={2} $color="#ff7f7f" />
        <AxisLabel $top={80} $left={-13} $color="#7777ff">Z</AxisLabel>
      </ViewCube>
      <NavTools />
      <Warning aria-label="Warnings">
        <svg width="28" height="26" viewBox="0 0 28 26">
          <defs>
            <linearGradient id="warn" x2="0" y2="1">
              <stop offset="0" stopColor="#fff36a" />
              <stop offset="1" stopColor="#ffb900" />
            </linearGradient>
          </defs>
          <path d="M14 2l12 22H2z" fill="url(#warn)" stroke="#1c1c1c" strokeWidth="2" strokeLinejoin="round" />
          <path d="M12.5 9h3l-.5 8h-2z" fill="#222" />
          <circle cx="14" cy="20" r="1.7" fill="#222" />
        </svg>
      </Warning>
    </Viewport>
  );
}

function TimelineBar() {
  return (
    <Timeline>
      <ScrollThumb />
      <Playback>
        {playback.map((b) => (
          <button key={b.label} aria-label={b.label}>
            <svg width={b.w} height="24" viewBox={`0 0 ${b.w} 24`}>
              <path d={b.d} fill="currentColor" />
            </svg>
          </button>
        ))}
      </Playback>
      <Track>
        {features.map((f, i) => (
          <Feature key={i} $first={i === 0} $last={i === features.length - 1}>
            <FeatureButton aria-label={`${f} ${i + 1}`}>
              <Glyph name={f} size={28} />
            </FeatureButton>
          </Feature>
        ))}
        <TrackEnd />
      </Track>
      <SettingsButton aria-label="Timeline settings">
        <svg width="26" height="26" viewBox="0 0 26 26">
          <g fill="currentColor">
            {[0, 45, 90, 135].map((a) => (
              <rect key={a} x="10" y="0.5" width="6" height="25" rx="1" transform={`rotate(${a} 13 13)`} />
            ))}
            <circle cx="13" cy="13" r="9" />
          </g>
          <circle cx="13" cy="13" r="4" fill={C.panel} />
        </svg>
      </SettingsButton>
    </Timeline>
  );
}

export default function App() {
  return (
    <>
      <GlobalStyle />
      <Shell>
        <TopBar />
        <RibbonBar />
        <Canvas />
        <TimelineBar />
      </Shell>
    </>
  );
}
